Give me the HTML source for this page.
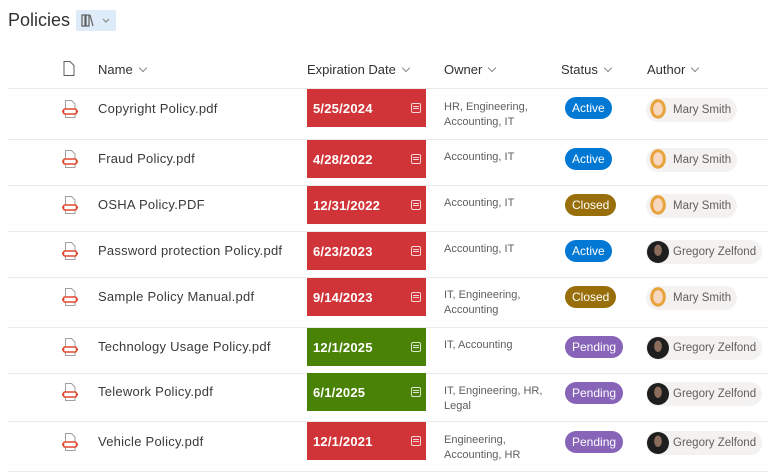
<!DOCTYPE html>
<html><head><meta charset="utf-8"><style>
*{margin:0;padding:0;box-sizing:border-box}
body{width:768px;height:473px;background:#fff;font-family:"Liberation Sans",sans-serif;color:#323130;position:relative;overflow:hidden}
.a{position:absolute;white-space:nowrap}
.title{left:8px;top:10px;font-size:18px;color:#323130}
.vb{left:76px;top:10px;width:40px;height:21px;background:#deecf9;border-radius:2px}
.hd{top:62px;font-size:13px;color:#323130}
.chev{display:inline-block;width:6px;height:6px;border-right:1px solid #8a8886;border-bottom:1px solid #8a8886;transform:rotate(45deg);margin-left:7px;position:relative;top:-3px}
.line{left:8px;width:760px;height:1px;background:#edebe9}
.name{left:98px;font-size:13px;letter-spacing:.25px;color:#3b3a39}
.box{left:307px;width:119px;height:38px;color:#fff;font-weight:bold;font-size:13px;padding:12px 0 0 6px;letter-spacing:.2px}
.red{background:#d13438}.grn{background:#498205}
.cal{position:absolute;right:5px;top:14px;width:10px;height:10px;border:1px solid #fff;border-radius:2px;opacity:.8}
.cal:after{content:"";position:absolute;left:1px;right:1px;top:2px;height:1px;background:#fff;box-shadow:0 2px 0 #fff}
.own{left:444px;font-size:11px;color:#605e5c;line-height:15px}
.pill{left:565px;height:22px;border-radius:11px;color:#fff;font-size:12px;line-height:22px;padding:0 7px}
.act{background:#0078d4}.cls{background:#986f0b}.pen{background:#8764b8}
.au{left:646px;height:24px;border-radius:12px;background:#f3f2f1;font-size:11.5px;color:#605e5c;line-height:24px;padding:0 6px 0 27px}
.av{position:absolute;left:1px;top:1px;width:22px;height:22px;border-radius:50%}
.mary{background:radial-gradient(ellipse 5px 7px at 50% 45%,#f7d7c0 0 90%,transparent 100%),radial-gradient(ellipse 8px 10px at 50% 45%,#e8a33c 0 95%,#f3f2f1 100%)}
.greg{background:radial-gradient(ellipse 4px 6px at 50% 42%,#8a6d5c 0 90%,#1e1e1e 100%)}
.pdf{left:62px;width:16px;height:18px}
</style></head><body>
<div class="a title">Policies</div>
<div class="a vb"><svg width="40" height="21"><g fill="none" stroke="#605e5c" stroke-width="1.2"><rect x="6" y="5" width="3" height="11"/><rect x="10" y="5" width="3" height="11"/><path d="M14 5l3 11"/><path d="M27 9l3 3 3-3" stroke="#8a8886"/></g></svg></div>
<svg class="a" style="left:63px;top:61px" width="12" height="15"><path d="M1 .5h6l4 4v10H1z" fill="none" stroke="#605e5c"/></svg>
<div class="a hd" style="left:98px">Name<span class="chev"></span></div>
<div class="a hd" style="left:307px">Expiration Date<span class="chev"></span></div>
<div class="a hd" style="left:444px">Owner<span class="chev"></span></div>
<div class="a hd" style="left:561px">Status<span class="chev"></span></div>
<div class="a hd" style="left:647px">Author<span class="chev"></span></div>

<svg width="0" height="0" style="position:absolute"><defs><g id="pd"><path d="M3.5 .5h6l3.5 3.5v13.5h-9.5z" fill="#fff" stroke="#a19f9d"/><rect x="1.5" y="9" width="13" height="5" rx="1.5" fill="#fff" stroke="#e0492f" stroke-width="1.6"/><rect x="0" y="10.5" width="2" height="2" fill="#e0492f"/><rect x="14" y="10.5" width="2" height="2" fill="#e0492f"/></g></defs></svg>

<div class="a line" style="top:88px"></div>
<svg class="a pdf" style="top:100px"><use href="#pd"/></svg>
<div class="a name" style="top:101px">Copyright Policy.pdf</div>
<div class="a box red" style="top:89px">5/25/2024<span class="cal"></span></div>
<div class="a own" style="top:100px">HR, Engineering,<br>Accounting, IT</div>
<div class="a pill act" style="top:97px">Active</div>
<div class="a au" style="top:98px"><span class="av mary"></span>Mary Smith</div>

<div class="a line" style="top:139px"></div>
<svg class="a pdf" style="top:150px"><use href="#pd"/></svg>
<div class="a name" style="top:151px">Fraud Policy.pdf</div>
<div class="a box red" style="top:140px">4/28/2022<span class="cal"></span></div>
<div class="a own" style="top:150px">Accounting, IT</div>
<div class="a pill act" style="top:148px">Active</div>
<div class="a au" style="top:148px"><span class="av mary"></span>Mary Smith</div>

<div class="a line" style="top:185px"></div>
<svg class="a pdf" style="top:196px"><use href="#pd"/></svg>
<div class="a name" style="top:197px">OSHA Policy.PDF</div>
<div class="a box red" style="top:186px">12/31/2022<span class="cal"></span></div>
<div class="a own" style="top:196px">Accounting, IT</div>
<div class="a pill cls" style="top:194px">Closed</div>
<div class="a au" style="top:194px"><span class="av mary"></span>Mary Smith</div>

<div class="a line" style="top:231px"></div>
<svg class="a pdf" style="top:242px"><use href="#pd"/></svg>
<div class="a name" style="top:243px">Password protection Policy.pdf</div>
<div class="a box red" style="top:232px">6/23/2023<span class="cal"></span></div>
<div class="a own" style="top:242px">Accounting, IT</div>
<div class="a pill act" style="top:240px">Active</div>
<div class="a au" style="top:240px"><span class="av greg"></span>Gregory Zelfond</div>

<div class="a line" style="top:277px"></div>
<svg class="a pdf" style="top:288px"><use href="#pd"/></svg>
<div class="a name" style="top:289px">Sample Policy Manual.pdf</div>
<div class="a box red" style="top:278px">9/14/2023<span class="cal"></span></div>
<div class="a own" style="top:288px">IT, Engineering,<br>Accounting</div>
<div class="a pill cls" style="top:286px">Closed</div>
<div class="a au" style="top:286px"><span class="av mary"></span>Mary Smith</div>

<div class="a line" style="top:327px"></div>
<svg class="a pdf" style="top:338px"><use href="#pd"/></svg>
<div class="a name" style="top:339px">Technology Usage Policy.pdf</div>
<div class="a box grn" style="top:328px">12/1/2025<span class="cal"></span></div>
<div class="a own" style="top:338px">IT, Accounting</div>
<div class="a pill pen" style="top:336px">Pending</div>
<div class="a au" style="top:336px"><span class="av greg"></span>Gregory Zelfond</div>

<div class="a line" style="top:373px"></div>
<svg class="a pdf" style="top:383px"><use href="#pd"/></svg>
<div class="a name" style="top:384px">Telework Policy.pdf</div>
<div class="a box grn" style="top:373px">6/1/2025<span class="cal"></span></div>
<div class="a own" style="top:384px">IT, Engineering, HR,<br>Legal</div>
<div class="a pill pen" style="top:382px">Pending</div>
<div class="a au" style="top:382px"><span class="av greg"></span>Gregory Zelfond</div>

<div class="a line" style="top:421px"></div>
<svg class="a pdf" style="top:433px"><use href="#pd"/></svg>
<div class="a name" style="top:434px">Vehicle Policy.pdf</div>
<div class="a box red" style="top:422px">12/1/2021<span class="cal"></span></div>
<div class="a own" style="top:433px">Engineering,<br>Accounting, HR</div>
<div class="a pill pen" style="top:431px">Pending</div>
<div class="a au" style="top:431px"><span class="av greg"></span>Gregory Zelfond</div>
<div class="a line" style="top:471px"></div>
</body></html>
